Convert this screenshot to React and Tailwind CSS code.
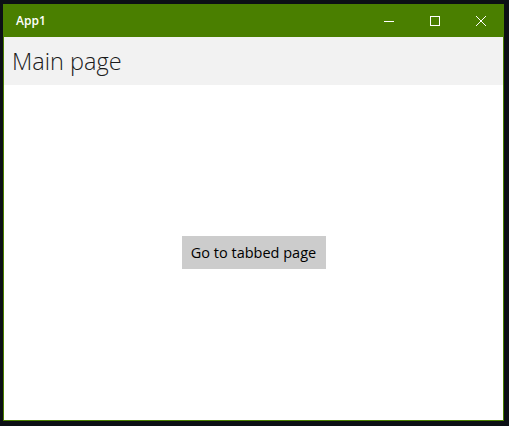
export default function App() {
  return (
    <div className="w-[509px] h-[426px] bg-[#0c1015] pl-[3px] pt-[4px]" style={{ fontFamily: '"Open Sans", "Noto Sans", sans-serif' }}>
      <div className="w-[501px] h-[417px] flex flex-col border-x border-b border-[#4a7f00] bg-white">
        <div className="h-[33px] -mx-px bg-[#4a7f00] flex items-center text-white shrink-0">
          <div className="flex-1 pl-[13px] text-[12px] font-semibold">App1</div>
          <div className="w-[46px] h-full flex items-center justify-center">
            <svg width="10" height="10" viewBox="0 0 10 10"><path d="M0 5.5h10" stroke="white" strokeWidth="1" /></svg>
          </div>
          <div className="w-[46px] h-full flex items-center justify-center">
            <svg width="10" height="10" viewBox="0 0 10 10"><rect x="0.5" y="0.5" width="9" height="9" fill="none" stroke="white" strokeWidth="1" /></svg>
          </div>
          <div className="w-[46px] h-full flex items-center justify-center">
            <svg width="10" height="10" viewBox="0 0 10 10"><path d="M0 0L10 10M10 0L0 10" stroke="white" strokeWidth="1" /></svg>
          </div>
        </div>
        <div className="h-[48px] bg-[#f2f2f2] flex items-center pl-[8px] shrink-0">
          <span className="text-[23.5px] font-light text-[#1a1a1a] leading-none mt-[1px]">Main page</span>
        </div>
        <div className="flex-1 flex items-center justify-center">
          <button className="w-[144px] h-[33px] bg-[#cccccc] text-[14.5px] text-black flex items-center justify-center">
            Go to tabbed page
          </button>
        </div>
      </div>
    </div>
  );
}
